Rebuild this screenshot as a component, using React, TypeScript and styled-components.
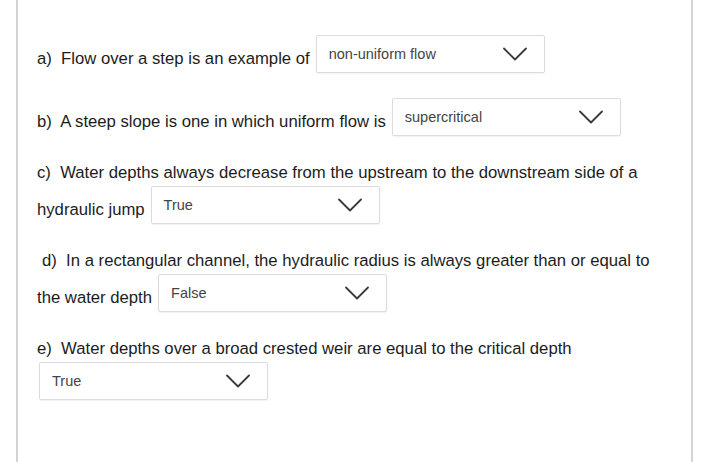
import { createGlobalStyle, styled } from 'styled-components';

const GlobalStyle = createGlobalStyle`
  html, body {
    margin: 0;
    padding: 0;
    background: #fff;
  }
  body {
    font-family: "Liberation Sans", Arial, sans-serif;
    color: #1c1c1c;
  }
`

const Page = styled.div`
  width: 720px;
  height: 462px;
  overflow: hidden;
  padding-left: 16px;
  box-sizing: border-box;
`

const Card = styled.div`
  width: 677px;
  min-height: 462px;
  box-sizing: border-box;
  border-left: 2px solid #d4d4d4;
  border-right: 2px solid #d4d4d4;
  padding: 35px 0 0 19px;
  display: flex;
  flex-direction: column;
  gap: 25px;
`

const Question = styled.div`
  display: flex;
  flex-direction: column;
  gap: 1px;
`

const Row = styled.div<{ $offset?: number }>`
  display: flex;
  align-items: flex-end;
  gap: 6px;
  padding-left: ${props => props.$offset ?? 0}px;
`

const Label = styled.span`
  font-size: 16.7px;
  line-height: 24px;
  padding-bottom: 2px;
  white-space: nowrap;
`

const Line = styled.div<{ $indent?: number }>`
  font-size: 16.7px;
  line-height: 24px;
  white-space: nowrap;
  padding-left: ${props => props.$indent ?? 0}px;
`

const Select = styled.div`
  width: 229px;
  height: 38px;
  box-sizing: border-box;
  border: 1px solid #dcdcdc;
  border-radius: 2px;
  box-shadow: 0 1px 2px rgba(0, 0, 0, 0.06);
  display: flex;
  align-items: center;
  justify-content: space-between;
  padding: 0 17px 0 12px;
  background: #fff;
`

const SelectValue = styled.span`
  font-size: 14.5px;
  color: #444;
`

const Chevron = () => (
  <svg width="24" height="14" viewBox="0 0 24 14" fill="none">
    <path d="M1 1.5 L12 12.5 L23 1.5" stroke="#3a3a3a" strokeWidth="1.8" strokeLinecap="round" strokeLinejoin="round" />
  </svg>
)

const Dropdown = ({ value }: { value: string }) => (
  <Select>
    <SelectValue>{value}</SelectValue>
    <Chevron />
  </Select>
)

export default function App() {
  return (
    <>
      <GlobalStyle />
      <Page>
        <Card>
          <Question>
            <Row>
              <Label>a)&nbsp; Flow over a step is an example of</Label>
              <Dropdown value="non-uniform flow" />
            </Row>
          </Question>
          <Question>
            <Row>
              <Label>b)&nbsp; A steep slope is one in which uniform flow is</Label>
              <Dropdown value="supercritical" />
            </Row>
          </Question>
          <Question>
            <Line>c)&nbsp; Water depths always decrease from the upstream to the downstream side of a</Line>
            <Row>
              <Label>hydraulic jump</Label>
              <Dropdown value="True" />
            </Row>
          </Question>
          <Question>
            <Line $indent={5}>d)&nbsp; In a rectangular channel, the hydraulic radius is always greater than or equal to</Line>
            <Row>
              <Label>the water depth</Label>
              <Dropdown value="False" />
            </Row>
          </Question>
          <Question>
            <Line>e)&nbsp; Water depths over a broad crested weir are equal to the critical depth</Line>
            <Row $offset={2}>
              <Dropdown value="True" />
            </Row>
          </Question>
        </Card>
      </Page>
    </>
  )
}
